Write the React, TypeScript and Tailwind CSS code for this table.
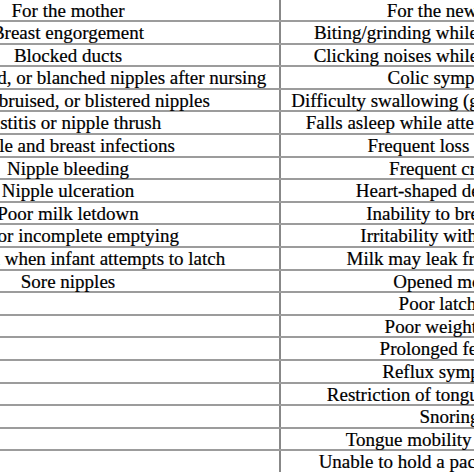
const ROWS: [string, string][] = [
  ["Breast engorgement", "Biting/grinding while breastfeeding"],
  ["Blocked ducts", "Clicking noises while breastfeeding"],
  ["Creased, flattened, or blanched nipples after nursing", "Colic symptoms"],
  ["Cracked, bruised, or blistered nipples", "Difficulty swallowing (gagging, choking)"],
  ["Mastitis or nipple thrush", "Falls asleep while attempting to nurse"],
  ["Nipple and breast infections", "Frequent loss of latch"],
  ["Nipple bleeding", "Frequent crying"],
  ["Nipple ulceration", "Heart-shaped depression"],
  ["Poor milk letdown", "Inability to breastfeed"],
  ["Poor or incomplete emptying", "Irritability with feeding"],
  ["Nipple pain when infant attempts to latch", "Milk may leak from mouth"],
  ["Sore nipples", "Opened mouth"],
  ["", "Poor latching"],
  ["", "Poor weight gain"],
  ["", "Prolonged feeding"],
  ["", "Reflux symptoms"],
  ["", "Restriction of tongue movement"],
  ["", "Snoring"],
  ["", "Tongue mobility restriction"],
  ["", "Unable to hold a pacifier in mouth"],
];

function Row({ left, right, last }: { left: string; right: string; last?: boolean }) {
  return (
    <div className={`flex ${last ? "" : "border-b-2 border-[#9c9c9c]"}`}>
      <div className="w-[422px] shrink-0 h-[20.6px] leading-[21.4px] text-center whitespace-nowrap">
        {left}
      </div>
      <div className="w-[339px] shrink-0 h-[20.6px] leading-[21.4px] text-center whitespace-nowrap border-l-2 border-[#888]">
        {right}
      </div>
    </div>
  );
}

export default function App() {
  return (
    <div className="w-[474px] h-[474px] overflow-hidden bg-white">
      <div
        className="ml-[-143px] w-[761px] text-[19px] text-black [-webkit-text-stroke:0.2px_#000]"
        style={{ fontFamily: '"Liberation Serif", "Times New Roman", serif' }}
      >
        <div className="flex border-b-2 border-[#9c9c9c]">
          <div className="w-[422px] shrink-0 h-[20px] leading-[21px] text-center whitespace-nowrap">
            For the mother
          </div>
          <div className="w-[339px] shrink-0 h-[20px] leading-[21px] text-center whitespace-nowrap border-l-2 border-[#888]">
            For the newborn
          </div>
        </div>
        {ROWS.map(([l, r], i) => (
          <Row key={i} left={l} right={r} last={i === ROWS.length - 1} />
        ))}
      </div>
    </div>
  );
}
